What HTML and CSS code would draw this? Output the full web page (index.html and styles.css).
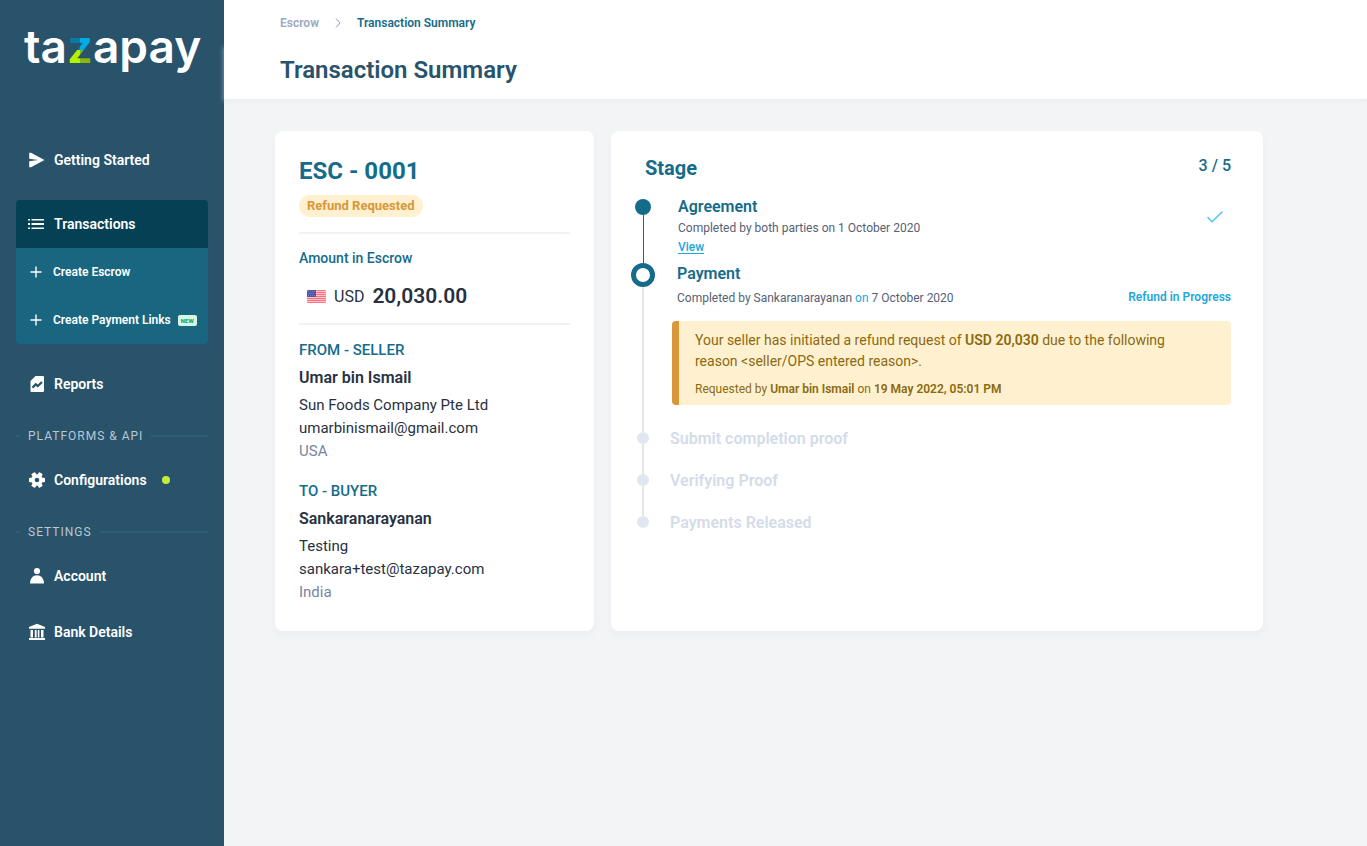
FILE: index.html
```html
<!DOCTYPE html>
<html lang="en">
<head>
<meta charset="utf-8">
<meta name="viewport" content="width=device-width, initial-scale=1">
<title>Transaction Summary</title>
<link rel="stylesheet" href="styles.css">
</head>
<body>
<div class="app">
  <aside class="sidebar">
    <div class="logo">ta<span class="logo-z">z</span>apay</div>
    <nav class="nav">
      <a class="nav-item" href="#">
        <svg class="icon" viewBox="0 0 18 18"><path fill="currentColor" d="M1.200 1.800H3L16.500 9 3 16.200H1.200V10.200L10 9 1.200 7.800Z"/></svg>
        Getting Started
      </a>
      <div class="nav-group">
        <a class="nav-item nav-item-active" href="#">
          <svg class="icon" viewBox="0 0 18 18"><path fill="currentColor" d="M0 4h2v1.500H0zM3.500 4H16v1.500H3.500zM0 8h2v2H0zM3.500 8H16v2H3.500zM0 12.500h2V14H0zM3.500 12.500H16V14H3.500z"/></svg>
          Transactions
        </a>
        <a class="nav-item nav-sub" href="#">
          <svg class="icon-plus" viewBox="0 0 12 12"><path stroke="currentColor" stroke-width="1.400" d="M6 .5v11M.5 6h11"/></svg>
          Create Escrow
        </a>
        <a class="nav-item nav-sub" href="#">
          <svg class="icon-plus" viewBox="0 0 12 12"><path stroke="currentColor" stroke-width="1.400" d="M6 .5v11M.5 6h11"/></svg>
          Create Payment Links <span class="new">NEW</span>
        </a>
      </div>
      <a class="nav-item" href="#">
        <svg class="icon" viewBox="0 0 18 18"><path fill="currentColor" d="M7.500 1H15Q16 1 16 2V16Q16 17 15 17H3.500Q2.500 17 2.500 16V6Z"/><path fill="none" stroke="#28536b" stroke-width="2.200" d="M4.500 12.600L7.800 9.300 9.800 11 14 7"/></svg>
        Reports
      </a>
      <h2 class="nav-label">PLATFORMS &amp; API</h2>
      <a class="nav-item" href="#">
        <svg class="icon" viewBox="0 0 18 18"><g fill="currentColor"><circle cx="9" cy="9" r="5.800"/><rect x="1" y="6.800" width="16" height="4.400" rx="1"/><rect x="1" y="6.800" width="16" height="4.400" rx="1" transform="rotate(60 9 9)"/><rect x="1" y="6.800" width="16" height="4.400" rx="1" transform="rotate(120 9 9)"/></g><circle cx="9" cy="9" r="2.300" fill="#28536b"/></svg>
        Configurations <span class="status-dot"></span>
      </a>
      <h2 class="nav-label">SETTINGS</h2>
      <a class="nav-item" href="#">
        <svg class="icon" viewBox="0 0 18 18"><circle cx="9" cy="4" r="3.100" fill="currentColor"/><path fill="currentColor" d="M2 16.500C2 11.500 5 8.200 9 8.200S16 11.500 16 16.500Z"/></svg>
        Account
      </a>
      <a class="nav-item nav-item-spaced" href="#">
        <svg class="icon" viewBox="0 0 18 18"><path fill="currentColor" d="M9 .8L17 4V5.800H1V4ZM2.500 7H5v7.500H2.500zM6.800 7H8.600v7.500H6.800zM9.800 7h1.600v7.500H9.800zM13 7H15.500v7.500H13zM1 15h16v2H1z"/></svg>
        Bank Details
      </a>
    </nav>
  </aside>

  <main class="main">
    <header class="header">
      <nav class="crumbs" aria-label="Breadcrumb">
        <a class="crumb" href="#">Escrow</a>
        <svg class="crumb-sep" viewBox="0 0 6 10"><path fill="none" stroke="#8d9db8" d="M1 .5L5 5 1 9.500"/></svg>
        <span class="crumb-current">Transaction Summary</span>
      </nav>
      <div class="title-bar"><h1 class="page-title">Transaction Summary</h1></div>
    </header>

    <div class="content">
      <section class="card summary">
        <h2 class="escrow-id">ESC - 0001</h2>
        <span class="pill">Refund Requested</span>
        <div class="amount">
          <h3 class="amount-label">Amount in Escrow</h3>
          <div class="amount-row">
            <svg class="flag" viewBox="0 0 19 13"><clipPath id="flag-clip"><rect width="19" height="13" rx="1.500"/></clipPath><g clip-path="url(#flag-clip)"><rect width="19" height="13" fill="#ffc4c9"/><path fill="#ff7381" d="M0 0h19v1H0zM0 2h19v1H0zM0 4h19v1H0zM0 6h19v1H0zM0 8h19v1H0zM0 10h19v1H0zM0 12h19v1H0z"/><rect width="9" height="7" fill="#5257a5"/><path stroke="#777bc0" stroke-dasharray="1 1" d="M1 1.500h7M2 3.500h6M1 5.500h7"/></g></svg>
            <span class="currency">USD</span>
            <strong class="amount-value">20,030.00</strong>
          </div>
        </div>
        <div class="party">
          <h3 class="party-role">FROM - SELLER</h3>
          <p class="party-name">Umar bin Ismail</p>
          <p class="party-line">Sun Foods Company Pte Ltd</p>
          <p class="party-line">umarbinismail@gmail.com</p>
          <p class="party-line party-country">USA</p>
        </div>
        <div class="party">
          <h3 class="party-role">TO - BUYER</h3>
          <p class="party-name">Sankaranarayanan</p>
          <p class="party-line">Testing</p>
          <p class="party-line">sankara+test@tazapay.com</p>
          <p class="party-line party-country">India</p>
        </div>
      </section>

      <section class="card stages">
        <div class="stages-head">
          <h2 class="stages-title">Stage</h2>
          <span class="stages-count">3 / 5</span>
        </div>
        <ol class="timeline">
          <li class="stage stage-done">
            <span class="rail"><span class="dot"></span></span>
            <div class="stage-body stage-split">
              <div>
                <h3 class="stage-name">Agreement</h3>
                <p class="stage-text">Completed by both parties on 1 October 2020</p>
                <a class="view" href="#">View</a>
              </div>
              <svg class="check" viewBox="0 0 16 12"><path fill="none" stroke="#56c5ec" stroke-width="1.600" stroke-linecap="round" stroke-linejoin="round" d="M1 6.500L5 10.800 15 1"/></svg>
            </div>
          </li>
          <li class="stage stage-current">
            <span class="rail"><span class="dot"></span></span>
            <div class="stage-body">
              <h3 class="stage-name">Payment</h3>
              <div class="stage-row">
                <p class="stage-text">Completed by Sankaranarayanan <span class="accent">on</span> 7 October 2020</p>
                <strong class="progress">Refund in Progress</strong>
              </div>
              <div class="alert">
                <p class="alert-text">Your seller has initiated a refund request of <b>USD 20,030</b> due to the following reason &lt;seller/OPS entered reason&gt;.</p>
                <p class="alert-meta">Requested by <b>Umar bin Ismail</b> on <b>19 May 2022, 05:01 PM</b></p>
              </div>
            </div>
          </li>
          <li class="stage stage-next">
            <span class="rail"><span class="dot"></span></span>
            <h3 class="stage-name">Submit completion proof</h3>
          </li>
          <li class="stage stage-next">
            <span class="rail"><span class="dot"></span></span>
            <h3 class="stage-name">Verifying Proof</h3>
          </li>
          <li class="stage stage-next">
            <span class="rail"><span class="dot"></span></span>
            <h3 class="stage-name">Payments Released</h3>
          </li>
        </ol>
      </section>
    </div>
  </main>
</div>
</body>
</html>
```
FILE: styles.css
```css
* { box-sizing: border-box; }

body {
  margin: 0;
  background: #f3f4f6;
  color: #283142;
  font-family: Roboto, "Noto Sans", sans-serif;
  font-size: 16px;
}

h1, h2, h3, p, ol { margin: 0; padding: 0; font-weight: 500; }
a { color: inherit; text-decoration: none; }
b { font-weight: 600; }
svg { display: block; flex: none; }

.app { display: flex; min-height: 100vh; }

/* Sidebar */
.sidebar {
  flex: none;
  width: 224px;
  padding: 20px 16px;
  background: #28536b;
  color: #fff;
}
.logo {
  height: 116px;
  padding-left: 8px;
  font-family: Inter, sans-serif;
  font-size: 46px;
  font-weight: 600;
  line-height: 52px;
}
.logo-z {
  background: conic-gradient(from 0deg at 50% 58%, #00aae4 0 90deg, #8ab50c 90deg 180deg, #b5f000 180deg 270deg, #0b7aa8 270deg);
  background-clip: text;
  -webkit-background-clip: text;
  color: transparent;
}
.nav-item {
  display: flex;
  align-items: center;
  gap: 8px;
  height: 48px;
  padding-left: 12px;
  font-size: 14px;
  font-weight: 600;
}
.icon { width: 18px; height: 18px; }
.nav-group {
  margin: 16px 0;
  overflow: hidden;
  border-radius: 4px;
  background: #18667f;
}
.nav-item-active { background: #054154; }
.nav-item-spaced { margin-top: 8px; }
.nav-sub { gap: 11px; padding-left: 14px; font-size: 12px; }
.icon-plus { width: 12px; height: 12px; }
.new {
  margin-left: -4px;
  padding: 0 3px;
  border-radius: 2px;
  background: #d5f5e5;
  color: #16a765;
  font-size: 6px;
  font-weight: 800;
  line-height: 11px;
}
.status-dot { width: 8px; height: 8px; margin-left: 7px; border-radius: 50%; background: #c2ee3b; }
.nav-label {
  display: flex;
  align-items: center;
  gap: 8px;
  height: 40px;
  margin-top: 8px;
  color: #b9c7d3;
  font-size: 12px;
  font-weight: 400;
  letter-spacing: 1px;
}
.nav-label::before, .nav-label::after { content: ""; height: 2px; background: #305d76; }
.nav-label::before { width: 4px; }
.nav-label::after { flex: 1; }

/* Header */
.main { flex: 1; min-width: 0; }
.header { background: #fff; }
.crumbs {
  position: relative;
  z-index: 1;
  display: flex;
  align-items: center;
  height: 45px;
  padding-left: 56px;
  background: #fff;
  font-size: 12px;
  font-weight: 600;
}
.crumb { color: #9aa8c0; }
.crumb-sep { width: 6px; height: 10px; margin: 0 16px; }
.crumb-current { color: #156c8a; }
.title-bar {
  height: 54px;
  padding: 7px 56px;
  background: #fff;
  box-shadow: 0 2px 5px #dfe5ec99;
}
.page-title { color: #28536b; font-size: 24px; font-weight: 600; line-height: 36px; }

/* Cards */
.content {
  display: grid;
  grid-template-columns: 319fr 652fr;
  gap: 17px;
  padding: 32px 104px 32px 51px;
}
.card { border-radius: 8px; background: #fff; box-shadow: 0 4px 6px #eaedf2; }

/* Summary card */
.summary { padding: 24px 24px 27px; }
.escrow-id { color: #156c8a; font-size: 24px; font-weight: 700; line-height: 32px; }
.pill {
  display: inline-block;
  margin-top: 8px;
  padding: 0 8px;
  border-radius: 11px;
  background: #fff1cf;
  color: #d99739;
  font-size: 13px;
  font-weight: 700;
  line-height: 22px;
  vertical-align: top;
}
.amount {
  margin-top: 15px;
  padding: 14px 0 11px;
  border-top: 2px solid #eff3f7;
  border-bottom: 2px solid #eff3f7;
}
.amount-label { color: #156c8a; font-size: 14px; line-height: 20px; }
.amount-row { display: flex; align-items: center; gap: 8px; height: 32px; margin-top: 12px; padding-left: 8px; }
.flag { width: 19px; height: 13px; }
.amount-value { font-size: 21px; font-weight: 600; }
.party { padding-top: 13px; }
.party + .party { padding-top: 16px; }
.party-role { color: #156c8a; font-size: 15px; line-height: 24px; }
.party-name { margin: 4px 0; font-weight: 600; font-size: 16px; line-height: 24px; }
.party-line { font-size: 15px; line-height: 23px; }
.party-country { color: #77869f; }

/* Stages card */
.stages { padding: 24px 32px 24px 20px; }
.stages-head { display: flex; justify-content: space-between; height: 44px; padding-left: 14px; color: #156c8a; }
.stages-title { font-size: 20px; font-weight: 700; line-height: 26px; }
.stages-count { line-height: 22px; font-weight: 500; }
.timeline { list-style: none; }
.stage { display: grid; grid-template-columns: 24px 1fr; column-gap: 15px; }
.rail { display: flex; flex-direction: column; align-items: center; }
.rail::after { content: ""; flex: 1; width: 2px; background: #e2e7ef; }
.dot { width: 12px; height: 12px; border-radius: 50%; background: #e0e7f0; }
.stage-name { color: #156c8a; font-size: 16px; font-weight: 600; line-height: 20px; }
.stage-text { color: #566176; font-size: 12px; line-height: 20px; }
.accent { color: #22a7da; }

.stage-done .dot { width: 16px; height: 16px; background: #156c8a; }
.stage-done .rail::after { width: 1px; background: #156c8a; }
.stage-done .stage-body { padding: 0 8px 7px; }
.stage-done .stage-name { line-height: 16px; margin-bottom: 3px; }
.stage-split { display: flex; justify-content: space-between; }
.check { width: 16px; height: 12px; margin-top: 12px; }
.view {
  display: block;
  width: fit-content;
  color: #22a7da;
  font-size: 12px;
  font-weight: 500;
  line-height: 18px;
  text-decoration: underline;
  text-underline-offset: 2px;
}

.stage-current .dot { width: 24px; height: 24px; border: 5px solid #156c8a; background: #fff; }
.stage-current .stage-body { padding-bottom: 27px; }
.stage-current .stage-name { padding-left: 7px; line-height: 22px; }
.stage-row { display: flex; justify-content: space-between; margin-top: 3px; padding-left: 7px; }
.progress { color: #22a7da; font-size: 12px; font-weight: 600; line-height: 18px; }
.alert {
  margin: 13px 0 0 2px;
  padding: 9px 24px 6px 16px;
  border-left: 7px solid #d99739;
  border-radius: 4px;
  background: #fff1cf;
  color: #8b6910;
}
.alert-text { font-size: 14px; line-height: 21px; }
.alert-meta { margin-top: 7px; font-size: 12px; line-height: 20px; }
.alert-text, .alert-meta, .stage-text, .party-line, .currency { font-weight: 400; }

.stage-next { height: 42px; }
.stage-next .stage-name { color: #d3dce8; line-height: 14px; }
.stage-next:last-child { height: 14px; }
.stage-next:last-child .rail::after { display: none; }
```
